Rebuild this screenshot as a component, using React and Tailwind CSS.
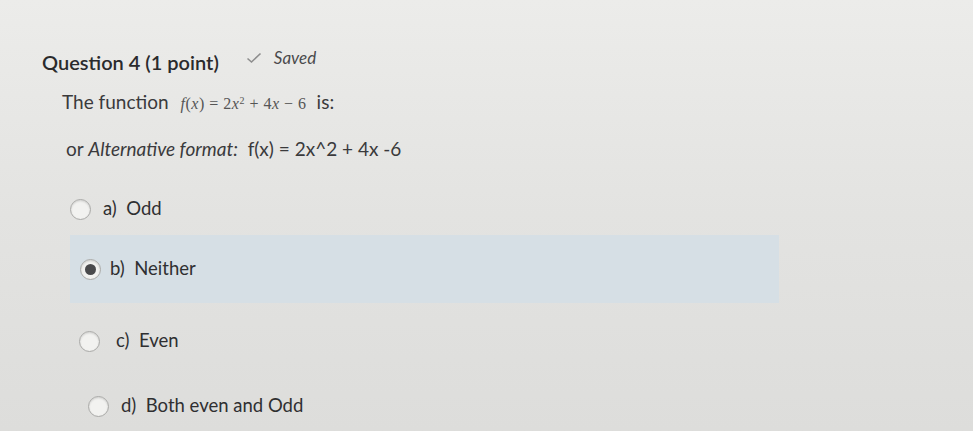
import React from "react";

function Radio({ checked }) {
  return (
    <span className="relative flex h-[21px] w-[21px] shrink-0 items-center justify-center rounded-full border border-[#a9a9a7] bg-[#f2f2f0] shadow-[inset_0_1px_2px_rgba(0,0,0,0.15)]">
      {checked && <span className="h-[11px] w-[11px] rounded-full bg-[#4a4a4c]" />}
    </span>
  );
}

function Option({ label, checked, pad, gap, h, highlight }) {
  return (
    <div
      className={`flex items-center ${pad} ${h} ${
        highlight ? "bg-[#d6dfe5]" : ""
      }`}
    >
      <Radio checked={checked} />
      <span className={`${gap} whitespace-pre text-[18.5px] text-[#2f2f31]`}>{label}</span>
    </div>
  );
}

export default function App() {
  return (
    <div
      className="h-[431px] w-[973px] overflow-hidden bg-gradient-to-b from-[#ececea] via-[#e3e3e1] to-[#dddddb] text-[#2e2e30]"
      style={{ fontFamily: "Lato, 'Open Sans', sans-serif" }}
    >
      <div className="flex flex-col pt-[47px]">
        <div className="flex items-center pl-[42px]">
          <span className="text-[20px] font-semibold text-[#2a2a2c]">
            Question 4 (1 point)
          </span>
          <svg className="ml-[27px] mt-[-8px]" width="16" height="12" viewBox="0 0 16 12">
            <path d="M1.5 6.5 L5.5 10 L14.5 1.5" fill="none" stroke="#8e8e8e" strokeWidth="1.6" />
          </svg>
          <span className="ml-[12px] mt-[-9px] text-[17px] italic text-[#4a4a4c]">Saved</span>
        </div>

        <div className="mt-[11px] flex items-baseline pl-[62px] text-[19px] text-[#3a3a3c]">
          <span>The function</span>
          <span
            className="ml-[12px] text-[16px] tracking-[0.5px] text-[#555]"
            style={{ fontFamily: "'Liberation Serif', 'DejaVu Serif', serif" }}
          >
            <i>f</i>(<i>x</i>) = 2<i>x</i>
            <sup className="text-[10px]">2</sup> + 4<i>x</i> − 6
          </span>
          <span className="ml-[10px]">is:</span>
        </div>

        <div className="mt-[18px] whitespace-pre pl-[66px] text-[19px] text-[#3a3a3c]">
          or <i>Alternative format:</i>  f(x) = 2x^2 + 4x -6
        </div>

        <div className="mt-[26px]">
          <Option label="a)  Odd" pad="pl-[70px]" gap="ml-[12px]" h="h-[40px]" />
        </div>

        <div className="mt-[6px] mr-[194px] ml-[70px]">
          <Option
            label="b)  Neither"
            checked
            highlight
            pad="pl-[10px]"
            gap="ml-[9px]"
            h="h-[68px]"
          />
        </div>

        <div className="mt-[18px]">
          <Option label="c)  Even" pad="pl-[79px]" gap="ml-[16px]" h="h-[40px]" />
        </div>

        <div className="mt-[25px]">
          <Option label="d)  Both even and Odd" pad="pl-[88px]" gap="ml-[12px]" h="h-[40px]" />
        </div>
      </div>
    </div>
  );
}
